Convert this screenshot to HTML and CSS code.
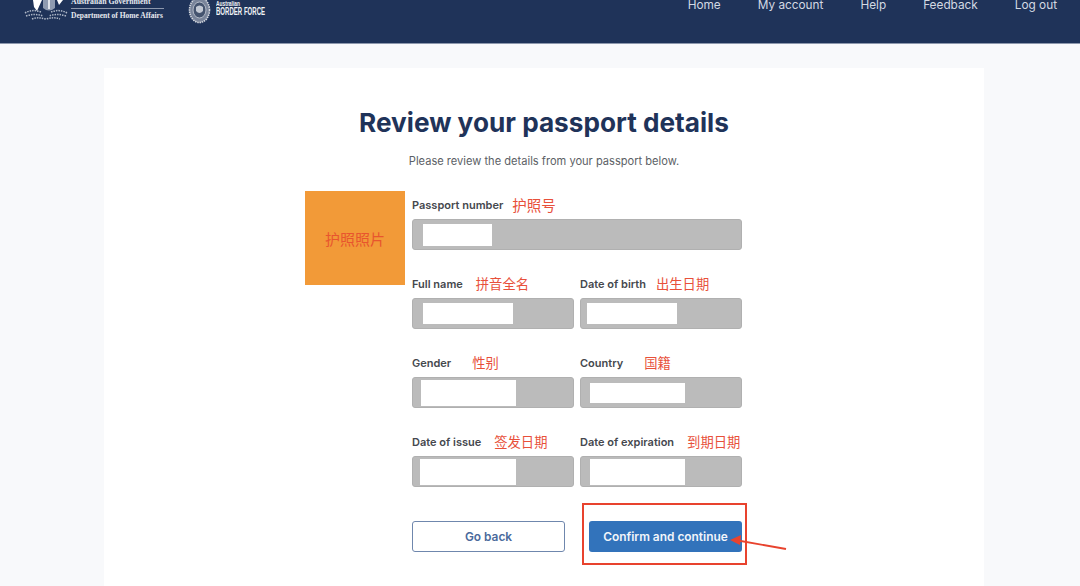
FILE: index.html
```html
<!DOCTYPE html>
<html lang="en">
<head>
  <meta charset="UTF-8">
  <meta name="viewport" content="width=device-width, initial-scale=1.0">
  <title>Review your passport details</title>
  <link rel="stylesheet" href="styles.css">
</head>
<body>
  <header class="topbar">
    <div class="brand">
      <svg class="crest" width="44" height="24" viewBox="0 0 44 24">
        <path d="M1 13c5-3 11-3 16-1M43 13c-5-3-11-3-16-1M2 16c6-2 12-2 17 0M42 16c-6-2-12-2-17 0M8 19c5-2 9-1 14 0 5-1 9-2 14 0" fill="none" stroke="#aeb7c6" stroke-width="1.5" stroke-dasharray="1.5 1"/>
        <path d="M19 0h12v8q-6 5-12 0z" fill="#8f9bb0"/>
        <path d="M9 0h9l-5 11-3-4z" fill="#fff"/>
        <path d="M33 0h6l-4 5z" fill="#fff"/>
        <path d="M24 0h2v9h-2z" fill="#dfe3ea"/>
      </svg>
      <div class="dept">
        <div class="dept-gov">Australian Government</div>
        <div class="dept-name">Department of Home Affairs</div>
      </div>
      <svg class="badge" width="23" height="27" viewBox="0 0 23 27">
        <ellipse cx="11.5" cy="13" rx="10" ry="12.5" fill="#79849a" stroke="#d5d9e0" stroke-width="1.6" stroke-dasharray="1.5 .8"/>
        <ellipse cx="11.5" cy="13" rx="6.5" ry="8" fill="#45546f" stroke="#b3bac8"/>
        <path d="M8 10q3.500-3 7 0v4q-3.500 4-7 0z" fill="#c3c9d4"/>
      </svg>
      <div class="force">
        <div class="force-top">Australian</div>
        <div class="force-name">BORDER FORCE</div>
      </div>
    </div>
    <nav class="nav">
      <a>Home</a>
      <a>My account</a>
      <a>Help</a>
      <a>Feedback</a>
      <a>Log out</a>
    </nav>
  </header>

  <main class="card">
    <h1>Review your passport details</h1>
    <p class="intro">Please review the details from your passport below.</p>

    <div class="review">
      <div class="photo">护照照片</div>
      <div class="fields">
        <div class="field wide">
          <div class="label">Passport number<span class="note n-passport">护照号</span></div>
          <div class="box"><span class="mask m-passport"></span></div>
        </div>
        <div class="field">
          <div class="label">Full name<span class="note n-name">拼音全名</span></div>
          <div class="box"><span class="mask m-name"></span></div>
        </div>
        <div class="field">
          <div class="label">Date of birth<span class="note n-birth">出生日期</span></div>
          <div class="box"><span class="mask m-birth"></span></div>
        </div>
        <div class="field">
          <div class="label">Gender<span class="note n-gender">性别</span></div>
          <div class="box"><span class="mask m-gender"></span></div>
        </div>
        <div class="field">
          <div class="label">Country<span class="note n-country">国籍</span></div>
          <div class="box"><span class="mask m-country"></span></div>
        </div>
        <div class="field">
          <div class="label">Date of issue<span class="note n-issue">签发日期</span></div>
          <div class="box"><span class="mask m-issue"></span></div>
        </div>
        <div class="field">
          <div class="label">Date of expiration<span class="note n-expiry">到期日期</span></div>
          <div class="box"><span class="mask m-expiry"></span></div>
        </div>
        <div class="actions">
          <button class="btn btn-back">Go back</button>
          <div class="confirm">
            <button class="btn btn-main">Confirm and continue</button>
            <span class="mark"></span>
            <svg class="arrow" width="62" height="22" viewBox="0 0 62 22">
              <path d="M60 19L12 10.500" stroke="#e8432e" stroke-width="1.8"/>
              <path d="M4 10l11-5-1 10z" fill="#e8432e"/>
            </svg>
          </div>
        </div>
      </div>
    </div>
  </main>
</body>
</html>
```

FILE: styles.css
```css
* {
  box-sizing: border-box;
}
body {
  margin: 0;
  height: 586px;
  overflow: hidden;
  background-color: #f8f9fb;
  font-family: Inter, "Noto Sans CJK SC", sans-serif;
}

/* top bar */
.topbar {
  height: 44px;
  padding: 0 23px 0 24px;
  display: flex;
  justify-content: space-between;
  align-items: flex-start;
  overflow: hidden;
  background-color: #1f3359;
  border-bottom: 1px solid #8d98ad;
}
.brand {
  display: flex;
  align-items: flex-start;
}
.crest {
  margin-right: 3px;
}
.dept {
  width: 93px;
  margin-top: -3px;
  margin-right: 24px;
  font-family: "Liberation Serif", serif;
  font-weight: 700;
  color: #e6e9ef;
}
.dept-gov {
  font-size: 7.8px;
  line-height: 10px;
  border-bottom: 1px solid #8d98ad;
  padding-bottom: 1px;
  margin-bottom: 2px;
}
.dept-name {
  font-size: 7.5px;
  line-height: 9px;
  white-space: nowrap;
}
.badge {
  margin-top: -3px;
  margin-right: 5px;
}
.force {
  font-family: "Liberation Sans", sans-serif;
  color: #f1f3f6;
  white-space: nowrap;
}
.force-top {
  font-size: 7px;
  line-height: 7px;
  font-weight: 700;
  transform: scaleX(.7);
  transform-origin: left;
}
.force-name {
  font-size: 11px;
  line-height: 9px;
  font-weight: 700;
  transform: scaleX(.55);
  transform-origin: left;
}
.nav {
  margin-top: -3px;
  display: flex;
  gap: 37px;
  font-size: 11.8px;
  line-height: 16px;
  color: #d3d9e3;
}

/* card */
.card {
  width: 880px;
  height: 518px;
  margin: 24px 0 0 104px;
  padding-top: 37px;
  background-color: #fff;
}
h1 {
  margin: 0;
  font-size: 26.2px;
  line-height: 36px;
  font-weight: 700;
  text-align: center;
  color: #1f3359;
}
.intro {
  margin: 12px 0 0;
  font-size: 11.1px;
  line-height: 16px;
  text-align: center;
  color: #5c5f66;
}
.review {
  margin: 22px 0 0 201px;
  display: flex;
  align-items: flex-start;
  gap: 7px;
}
.photo {
  width: 100px;
  height: 94px;
  display: flex;
  align-items: center;
  justify-content: center;
  background-color: #f29a38;
  color: #e8552e;
  font-size: 15px;
}
.fields {
  width: 330px;
  display: grid;
  grid-template-columns: 162px 162px;
  column-gap: 6px;
  row-gap: 20px;
}
.wide {
  grid-column: span 2;
}
.label {
  height: 28px;
  padding-top: 7px;
  font-size: 11px;
  line-height: 14px;
  font-weight: 600;
  color: #45484e;
  white-space: nowrap;
}
.note {
  font-size: 13.3px;
  font-weight: 400;
  color: #e8503a;
  vertical-align: -1px;
}
.n-passport { margin-left: 9px; font-size: 14.500px; vertical-align: -2px; }
.n-name { margin-left: 13px; }
.n-birth { margin-left: 10px; }
.n-gender { margin-left: 21px; }
.n-country { margin-left: 21px; }
.n-issue { margin-left: 13px; }
.n-expiry { margin-left: 13px; }

.box {
  height: 31px;
  display: flex;
  align-items: center;
  background-color: #bbb;
  border: 1px solid #b0b0b0;
  border-radius: 3px;
}
.mask {
  display: block;
  background-color: #fff;
}
.m-passport { width: 69px; height: 22px; margin-left: 10px; }
.m-name { width: 90px; height: 21px; margin-left: 10px; }
.m-birth { width: 90px; height: 21px; margin-left: 6px; }
.m-gender { width: 95px; height: 26px; margin-left: 8px; }
.m-country { width: 95px; height: 20px; margin-left: 9px; }
.m-issue { width: 96px; height: 26px; margin-left: 7px; }
.m-expiry { width: 95px; height: 26px; margin-left: 9px; }

/* buttons */
.actions {
  grid-column: span 2;
  margin-top: 14px;
  display: flex;
  justify-content: space-between;
}
.btn {
  width: 153px;
  height: 31px;
  padding: 0;
  border-radius: 3px;
  font-family: inherit;
  font-size: 11.9px;
  font-weight: 600;
}
.btn-back {
  background-color: #fff;
  border: 1px solid #6f87ad;
  color: #4a6a9c;
}
.btn-main {
  display: block;
  background-color: #3273bb;
  border: 0;
  color: #f1f5fa;
}
.confirm {
  position: relative;
}
.mark {
  position: absolute;
  left: -7px;
  top: -18px;
  width: 165px;
  height: 62px;
  border: 2px solid #e8432e;
}
.arrow {
  position: absolute;
  left: 137px;
  top: 9px;
}
```
